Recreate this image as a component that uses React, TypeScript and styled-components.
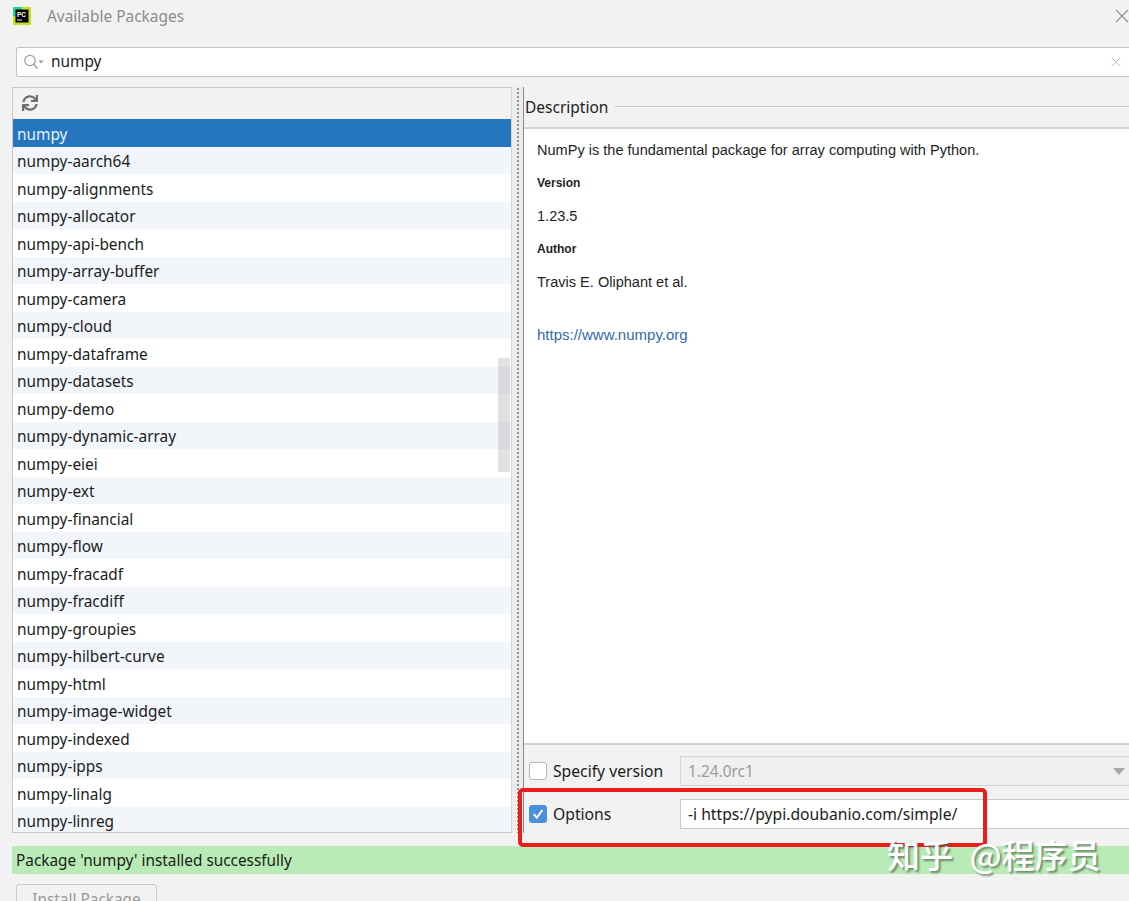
import styled, { createGlobalStyle } from 'styled-components';
import { FaSync } from 'react-icons/fa';

const packages = [
	'numpy',
	'numpy-aarch64',
	'numpy-alignments',
	'numpy-allocator',
	'numpy-api-bench',
	'numpy-array-buffer',
	'numpy-camera',
	'numpy-cloud',
	'numpy-dataframe',
	'numpy-datasets',
	'numpy-demo',
	'numpy-dynamic-array',
	'numpy-eiei',
	'numpy-ext',
	'numpy-financial',
	'numpy-flow',
	'numpy-fracadf',
	'numpy-fracdiff',
	'numpy-groupies',
	'numpy-hilbert-curve',
	'numpy-html',
	'numpy-image-widget',
	'numpy-indexed',
	'numpy-ipps',
	'numpy-linalg',
	'numpy-linreg',
];

const uiFont = `"Noto Sans", "Open Sans", sans-serif`;

const GlobalStyle = createGlobalStyle`
	html, body {
		background: #f2f2f2;
		height: 901px;
		margin: 0;
		overflow: hidden;
	}
`;

const Dialog = styled.div`
	background: #f2f2f2;
	color: #1c1c1c;
	display: flex;
	flex-direction: column;
	font-family: ${uiFont};
	font-size: 15.4px;
	height: 901px;
	overflow: hidden;
	position: relative;
	width: 1129px;

	& > * {
		flex: none;
	}
`;

const TitleBar = styled.header`
	align-items: center;
	display: flex;
	height: 32px;
	justify-content: space-between;
	padding: 0 0 0 13px;
`;

const TitleGroup = styled.div`
	align-items: center;
	display: flex;
	gap: 16px;
`;

const Title = styled.h1`
	color: #8c8c8c;
	font-size: 15.45px;
	font-weight: 400;
	margin: 0;
`;

const SearchBar = styled.div`
	align-items: center;
	background: #fff;
	border: 1px solid #c4c4c4;
	border-radius: 3px 0 0 3px;
	border-right: 0;
	box-sizing: border-box;
	display: flex;
	gap: 6px;
	height: 30px;
	margin: 15px 0 10px 16px;
	padding: 0 6px;
`;

const SearchText = styled.span`
	flex: 1;
	font-size: 15.4px;
	margin-top: -1px;
`;

const Columns = styled.div`
	display: grid;
	grid-template-columns: 500px 12px 1fr;
	height: 746px;
	margin-left: 12px;
`;

const ListPanel = styled.section`
	background: #fff;
	border: 1px solid #c9c9c9;
	border-right-color: #d6d6d6;
	box-sizing: border-box;
	display: flex;
	flex-direction: column;
	overflow: hidden;
	position: relative;
`;

const ListToolbar = styled.div`
	align-items: center;
	background: #f2f2f2;
	box-sizing: border-box;
	color: #6e6e6e;
	display: flex;
	flex: none;
	height: 31px;
	padding-bottom: 1px;
	padding-left: 9px;
`;

const PackageList = styled.ul`
	list-style: none;
	margin: 0;
	padding: 0;
`;

const PackageRow = styled.li<{ $selected: boolean; $striped: boolean }>`
	background: ${(p) => (p.$selected ? '#2675bf' : p.$striped ? '#f2f5f9' : '#fff')};
	box-sizing: border-box;
	color: ${(p) => (p.$selected ? '#e6f2ff' : '#1c1c1c')};
	font-size: 15.4px;
	height: 27.5px;
	line-height: 27.5px;
	padding-left: 4px;
	padding-top: 1.5px;
	white-space: nowrap;
`;

const ScrollThumb = styled.div`
	background: rgba(120, 120, 130, 0.22);
	height: 114px;
	position: absolute;
	right: 1px;
	top: 270px;
	width: 12px;
`;

const Splitter = styled.div`
	background-color: #ececec;
	background-image: radial-gradient(circle, #8f8f8f 0.7px, transparent 0.9px);
	background-position: 3px 0;
	background-repeat: repeat-y;
	background-size: 6px 4px;
	border-right: 1px solid #8a8a8a;
	box-sizing: border-box;
`;

const DetailPanel = styled.section`
	display: flex;
	flex-direction: column;
	min-width: 0;
`;

const LegendRow = styled.div`
	align-items: center;
	display: flex;
	flex: none;
	gap: 7px;
	height: 39px;
	margin-bottom: 1px;
	padding-left: 1px;
`;

const LegendLabel = styled.span`
	color: #222;
	font-size: 15.5px;
`;

const LegendRule = styled.span`
	background: #c9c9c9;
	flex: 1;
	height: 1px;
`;

const DescriptionBox = styled.article`
	background: #fff;
	border-bottom: 2px solid #cfcfcf;
	border-top: 2px solid #d2d2d2;
	box-sizing: border-box;
	color: #1f1f1f;
	flex: none;
	font-family: 'Liberation Sans', Arial, sans-serif;
	font-size: 14.55px;
	height: 618px;
	padding: 13px 13px;
`;

const BodyText = styled.p`
	line-height: 16px;
	margin: 0 0 17px;
`;

const FieldName = styled.h3`
	font-size: 12px;
	font-weight: 700;
	line-height: 16px;
	margin: 0 0 17px;
`;

const DocLink = styled.a`
	color: #2f6da8;
	display: block;
	font-size: 15px;
	line-height: 16px;
	margin-top: 37px;
	text-decoration: none;
`;

const OptionRow = styled.div<{ $top: number }>`
	align-items: center;
	display: grid;
	flex: none;
	grid-template-columns: 151px 1fr;
	height: 30px;
	margin-top: ${(p) => p.$top}px;
	padding-left: 5px;
`;

const CheckLabel = styled.label`
	align-items: center;
	display: flex;
	font-size: 15.7px;
	gap: 6px;
`;

const CheckBox = styled.span<{ $checked: boolean }>`
	align-items: center;
	background: ${(p) => (p.$checked ? '#4a90dc' : '#fff')};
	border: 1px solid ${(p) => (p.$checked ? '#4a90dc' : '#b5b5b5')};
	border-radius: 3px;
	box-sizing: border-box;
	display: flex;
	height: 18px;
	justify-content: center;
	width: 18px;
`;

const VersionSelect = styled.div`
	align-items: center;
	background: #f0f0f0;
	border: 1px solid #d2d2d2;
	border-right: 0;
	box-sizing: border-box;
	color: #9a9a9a;
	display: flex;
	font-size: 15.4px;
	height: 30px;
	justify-content: space-between;
	padding: 0 4px 0 7px;
`;

const Caret = styled.span`
	border-left: 6px solid transparent;
	border-right: 6px solid transparent;
	border-top: 7px solid #a8a8a8;
	height: 0;
	width: 0;
`;

const OptionsInput = styled.div`
	align-items: center;
	background: #fff;
	border: 1px solid #c9c9c9;
	border-right: 0;
	box-sizing: border-box;
	display: flex;
	font-size: 15.7px;
	height: 30px;
	padding-left: 7px;
`;

const StatusBar = styled.div`
	align-items: center;
	background: #b9ebb6;
	box-sizing: border-box;
	color: #1c1c1c;
	display: flex;
	font-size: 15.35px;
	height: 28px;
	margin: 13px 0 0 12px;
	padding-left: 4px;
`;

const InstallButton = styled.button`
	background: #f2f2f2;
	border: 1px solid #c9c9c9;
	border-radius: 3px;
	box-sizing: border-box;
	color: #9a9a9a;
	font-family: ${uiFont};
	font-size: 15.4px;
	height: 30px;
	margin: 10px 0 0 16px;
	padding: 0;
	width: 141px;
`;

const Highlight = styled.div`
	border: 4px solid #ea1c1c;
	border-radius: 5px;
	box-sizing: border-box;
	height: 59px;
	left: 518px;
	pointer-events: none;
	position: absolute;
	top: 788px;
	width: 469px;
`;

const Watermark = styled.div`
	color: #fff;
	font-family: 'Noto Sans CJK SC', sans-serif;
	font-size: 33px;
	font-weight: 500;
	left: 887px;
	line-height: 36px;
	position: absolute;
	text-shadow: 2px 2px 2px rgba(70, 90, 70, 0.65);
	top: 836px;
	white-space: nowrap;
	word-spacing: 9px;
`;

const PycharmLogo = () => (
	<svg width="18" height="18" viewBox="0 0 18 18">
		<rect width="18" height="18" fill="#c5e021" />
		<rect x="0" y="0" width="9" height="9" fill="#21d789" />
		<rect x="2.5" y="2.5" width="13" height="13" fill="#000" />
		<text x="4" y="9.5" fontSize="6.5" fontWeight="700" fontFamily="Liberation Sans, sans-serif" fill="#fff">
			PC
		</text>
		<rect x="4" y="12.5" width="5" height="1" fill="#fff" />
	</svg>
);

const CloseIcon = ({ size, color }: { size: number; color: string }) => (
	<svg width={size} height={size} viewBox="0 0 14 14">
		<path d="M1 1 13 13M13 1 1 13" stroke={color} strokeWidth="1.1" fill="none" />
	</svg>
);

const SearchIcon = () => (
	<svg width="22" height="16" viewBox="0 0 22 16">
		<circle cx="7" cy="6.5" r="5.2" stroke="#9a9a9a" strokeWidth="1.2" fill="none" />
		<path d="M10.8 10.2 14.5 14.5" stroke="#9a9a9a" strokeWidth="1.4" fill="none" />
		<path d="M15.5 6.5h5l-2.5 3z" fill="#9a9a9a" />
	</svg>
);

const CheckMark = () => (
	<svg width="12" height="12" viewBox="0 0 12 12">
		<path d="M1.8 6.2 4.8 9.6 10.4 2" stroke="#fff" strokeWidth="2" fill="none" />
	</svg>
);

const CloseSlot = styled.span`
	display: flex;
	margin-right: 2px;
`;

export default function App() {
	return (
		<>
			<GlobalStyle />
			<Dialog>
				<TitleBar>
					<TitleGroup>
						<PycharmLogo />
						<Title>Available Packages</Title>
					</TitleGroup>
					<CloseIcon size={14} color="#8f8f8f" />
				</TitleBar>
				<SearchBar>
					<SearchIcon />
					<SearchText>numpy</SearchText>
					<CloseSlot>
						<CloseIcon size={10} color="#b0b0b0" />
					</CloseSlot>
				</SearchBar>
				<Columns>
					<ListPanel>
						<ListToolbar>
							<FaSync size={16} />
						</ListToolbar>
						<PackageList>
							{packages.map((name, i) => (
								<PackageRow key={name} $selected={i === 0} $striped={i % 2 === 1}>
									{name}
								</PackageRow>
							))}
						</PackageList>
						<ScrollThumb />
					</ListPanel>
					<Splitter />
					<DetailPanel>
						<LegendRow>
							<LegendLabel>Description</LegendLabel>
							<LegendRule />
						</LegendRow>
						<DescriptionBox>
							<BodyText>NumPy is the fundamental package for array computing with Python.</BodyText>
							<FieldName>Version</FieldName>
							<BodyText>1.23.5</BodyText>
							<FieldName>Author</FieldName>
							<BodyText>Travis E. Oliphant et al.</BodyText>
							<DocLink href="#">https://www.numpy.org</DocLink>
						</DescriptionBox>
						<OptionRow $top={11}>
							<CheckLabel>
								<CheckBox $checked={false} />
								Specify version
							</CheckLabel>
							<VersionSelect>
								1.24.0rc1
								<Caret />
							</VersionSelect>
						</OptionRow>
						<OptionRow $top={13}>
							<CheckLabel>
								<CheckBox $checked>
									<CheckMark />
								</CheckBox>
								Options
							</CheckLabel>
							<OptionsInput>-i https://pypi.doubanio.com/simple/</OptionsInput>
						</OptionRow>
					</DetailPanel>
				</Columns>
				<StatusBar>Package 'numpy' installed successfully</StatusBar>
				<InstallButton disabled>Install Package</InstallButton>
				<Highlight />
				<Watermark>知乎 @程序员</Watermark>
			</Dialog>
		</>
	);
}
